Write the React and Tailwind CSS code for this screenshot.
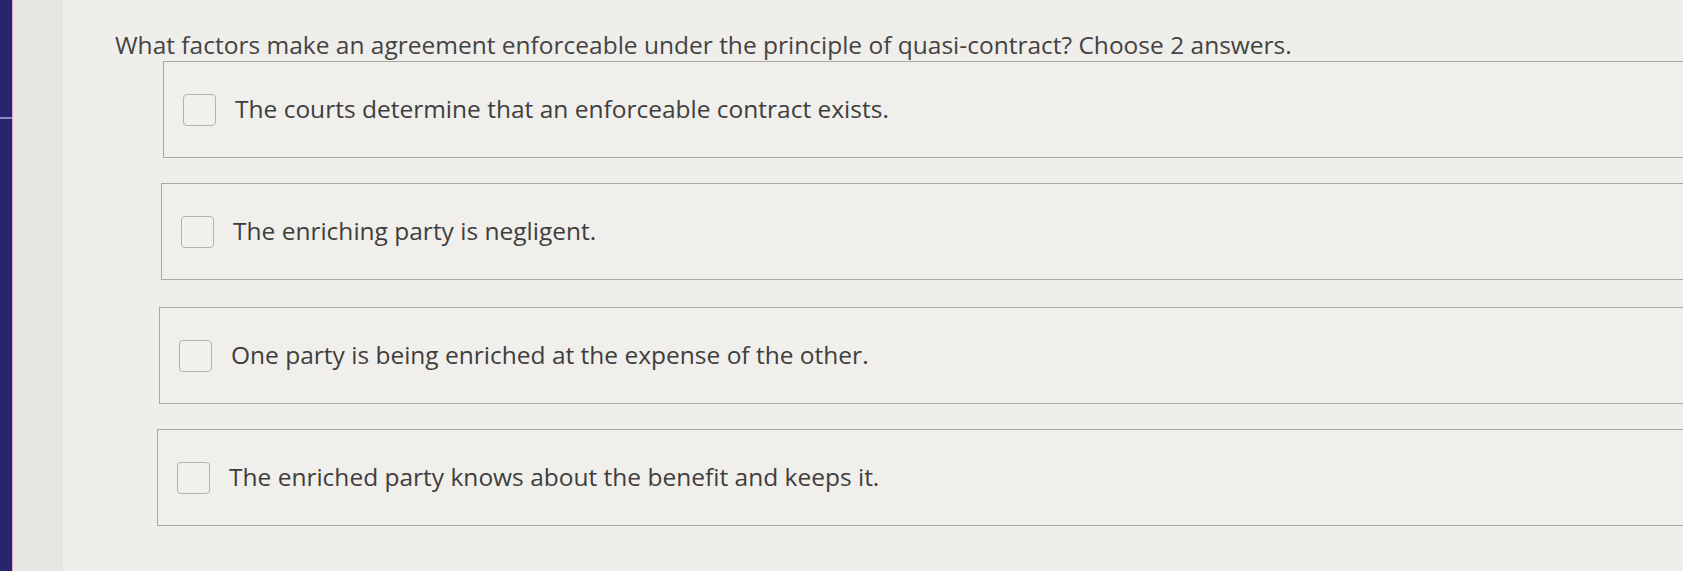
import React from "react";

const options = [
  { text: "The courts determine that an enforceable contract exists.", ml: "ml-[100px]", mt: "mt-[1px]" },
  { text: "The enriching party is negligent.", ml: "ml-[98px]", mt: "mt-[25px]" },
  { text: "One party is being enriched at the expense of the other.", ml: "ml-[96px]", mt: "mt-[27px]" },
  { text: "The enriched party knows about the benefit and keeps it.", ml: "ml-[94px]", mt: "mt-[25px]" },
];

export default function App() {
  return (
    <div className="flex h-[571px] w-full overflow-hidden" style={{ fontFamily: '"Open Sans", "Noto Sans", sans-serif' }}>
      <div className="flex w-[12px] shrink-0 flex-col bg-[#2a2370]">
        <div className="h-[117px]" />
        <div className="h-[2px] bg-[#8b89c2]" />
      </div>
      <div className="w-[1px] shrink-0 bg-[#d9a9c8]" />
      <div className="w-[50px] shrink-0 bg-[#e7e6e3]" />
      <div className="flex min-w-0 flex-1 flex-col bg-[#efeeeb] pt-[30px]">
        <div className="ml-[52px] whitespace-nowrap text-[24.5px] leading-[30px] text-[#444342]">
          What factors make an agreement enforceable under the principle of quasi-contract? Choose 2 answers.
        </div>
        {options.map((o, i) => (
          <div
            key={i}
            className={`${o.ml} ${o.mt} flex h-[97px] shrink-0 items-center border border-r-0 border-[#a9a8a5] bg-[#f0efec] pl-[19px]`}
          >
            <div className="h-[32px] w-[33px] shrink-0 rounded-[4px] border-[1.5px] border-[#b3b2ae] bg-[#f1f0ed]" />
            <div className="ml-[19px] whitespace-nowrap text-[24.5px] text-[#3f3e3d]">{o.text}</div>
          </div>
        ))}
      </div>
    </div>
  );
}
